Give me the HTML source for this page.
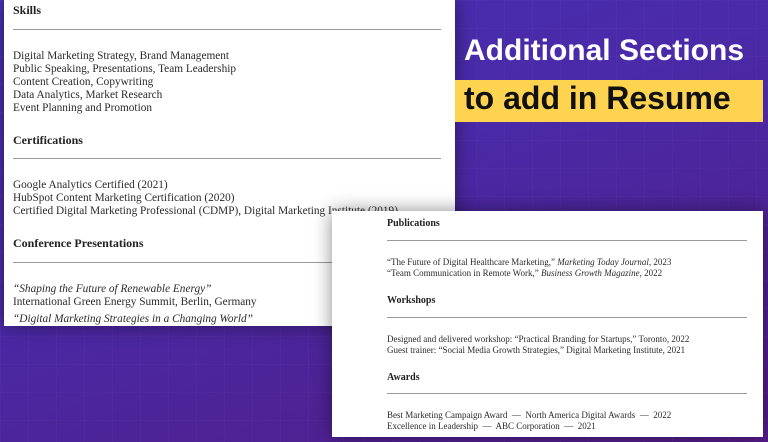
<!DOCTYPE html>
<html><head><meta charset="utf-8"><style>
*{margin:0;padding:0;box-sizing:border-box}
body{width:768px;height:442px;overflow:hidden;position:relative;
background:linear-gradient(160deg,#4630b4 0%,#4a2aa8 40%,#4d2396 70%,#561c8c 100%);
font-family:"Liberation Serif",serif;color:#2a2a2a}
.grid{position:absolute;inset:0;background-image:linear-gradient(rgba(255,255,255,.025) 1px,transparent 1px),linear-gradient(90deg,rgba(255,255,255,.025) 1px,transparent 1px);background-size:28px 28px}
.card{position:absolute;background:#fff;box-shadow:0 0 18px rgba(0,0,0,.45)}
.t{position:absolute;white-space:nowrap}
.h{font-weight:bold;color:#222}
.ln{position:absolute;height:1px;background:#999}
i{font-style:italic}
</style></head><body>
<div class="grid"></div>
<div class="card" style="left:4px;top:0;width:451px;height:326px">
 <div class="t h" style="left:9px;top:3px;font-size:12px">Skills</div>
 <div class="ln" style="left:9px;top:29px;width:428px"></div>
 <div class="t" style="left:9px;top:50px;font-size:11.3px;line-height:13px">Digital Marketing Strategy, Brand Management<br>Public Speaking, Presentations, Team Leadership<br>Content Creation, Copywriting<br>Data Analytics, Market Research<br>Event Planning and Promotion</div>
 <div class="t h" style="left:9px;top:133px;font-size:12px">Certifications</div>
 <div class="ln" style="left:9px;top:158px;width:428px"></div>
 <div class="t" style="left:9px;top:179px;font-size:11.3px;line-height:13px">Google Analytics Certified (2021)<br>HubSpot Content Marketing Certification (2020)<br>Certified Digital Marketing Professional (CDMP), Digital Marketing Institute (2019)</div>
 <div class="t h" style="left:9px;top:236px;font-size:12px">Conference Presentations</div>
 <div class="ln" style="left:9px;top:262px;width:428px"></div>
 <div class="t" style="left:9px;top:283px;font-size:11.3px;line-height:13px"><i>&ldquo;Shaping the Future of Renewable Energy&rdquo;</i><br>International Green Energy Summit, Berlin, Germany</div>
 <div class="t" style="left:9px;top:313px;font-size:11.3px"><i>&ldquo;Digital Marketing Strategies in a Changing World&rdquo;</i></div>
</div>
<div class="t" style="left:464px;top:34px;font-family:'Liberation Sans',sans-serif;font-weight:bold;font-size:30px;color:#fff">Additional Sections</div>
<div style="position:absolute;left:455px;top:80px;width:308px;height:42px;background:#fdd34f"></div>
<div class="t" style="left:464px;top:80px;font-family:'Liberation Sans',sans-serif;font-weight:bold;font-size:32px;color:#111">to add in Resume</div>
<div class="card" style="left:332px;top:211px;width:431px;height:226px">
 <div class="t h" style="left:55px;top:7px;font-size:10px">Publications</div>
 <div class="ln" style="left:55px;top:29px;width:360px"></div>
 <div class="t" style="left:55px;top:46px;font-size:9px;line-height:11px">&ldquo;The Future of Digital Healthcare Marketing,&rdquo; <i>Marketing Today Journal</i>, 2023<br>&ldquo;Team Communication in Remote Work,&rdquo; <i>Business Growth Magazine</i>, 2022</div>
 <div class="t h" style="left:55px;top:84px;font-size:10px">Workshops</div>
 <div class="ln" style="left:55px;top:106px;width:360px"></div>
 <div class="t" style="left:55px;top:123px;font-size:9px;line-height:11px">Designed and delivered workshop: &ldquo;Practical Branding for Startups,&rdquo; Toronto, 2022<br>Guest trainer: &ldquo;Social Media Growth Strategies,&rdquo; Digital Marketing Institute, 2021</div>
 <div class="t h" style="left:55px;top:161px;font-size:10px">Awards</div>
 <div class="ln" style="left:55px;top:182px;width:360px"></div>
 <div class="t" style="left:55px;top:199px;font-size:9px;line-height:11px">Best Marketing Campaign Award &nbsp;&mdash;&nbsp; North America Digital Awards &nbsp;&mdash;&nbsp; 2022<br>Excellence in Leadership &nbsp;&mdash;&nbsp; ABC Corporation &nbsp;&mdash;&nbsp; 2021</div>
</div>
</body></html>
